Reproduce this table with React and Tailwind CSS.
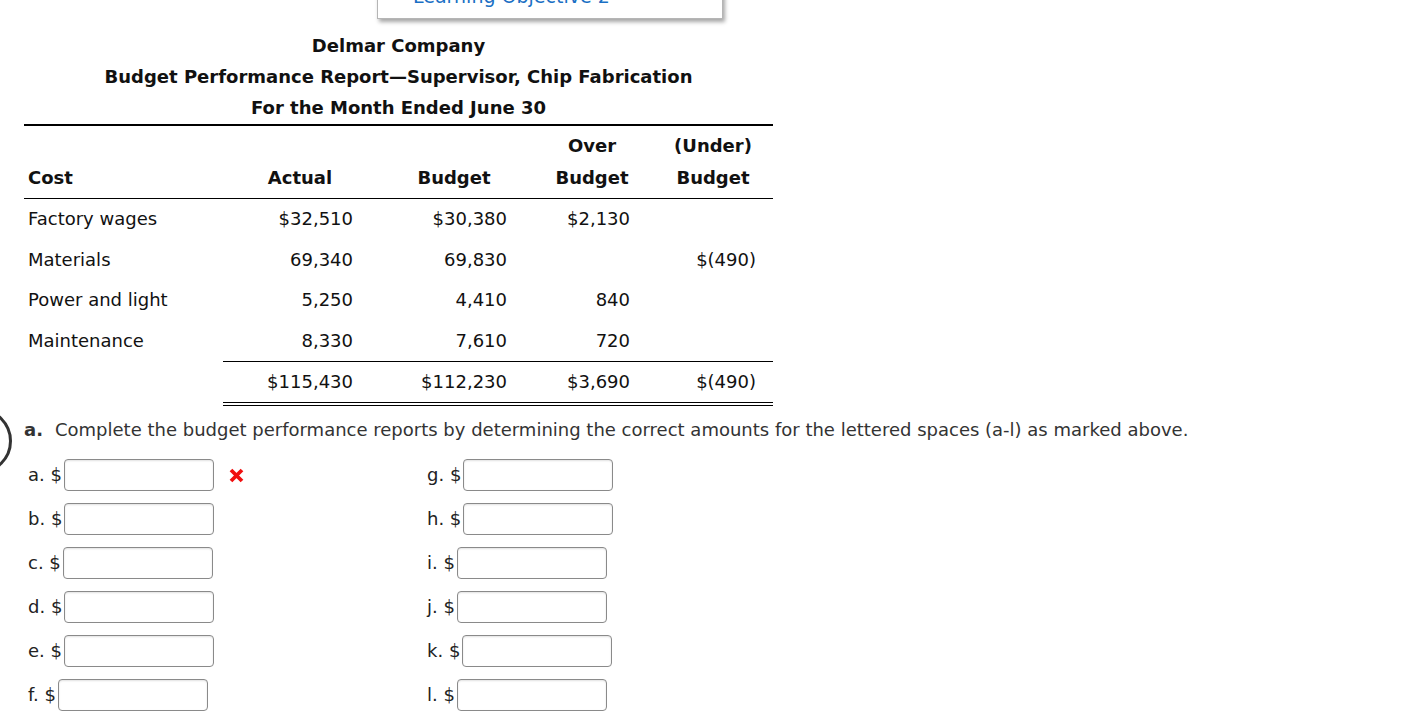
import React from "react";

const rows = [
  ["Factory wages", "$32,510", "$30,380", "$2,130", ""],
  ["Materials", "69,340", "69,830", "", "$(490)"],
  ["Power and light", "5,250", "4,410", "840", ""],
  ["Maintenance", "8,330", "7,610", "720", ""],
];

function RedX() {
  return (
    <svg width="15" height="15" viewBox="0 0 15 15" className="ml-[15px]">
      <path d="M2 2 L13 13 M13 2 L2 13" stroke="#f01010" strokeWidth="3.8" strokeLinecap="butt" />
    </svg>
  );
}

function Field({ label, x }) {
  return (
    <div className="flex items-center h-[32px]">
      <span className="whitespace-pre">{label} $</span>
      <div className="ml-[2px] w-[150px] h-[32px] rounded-[4px] border border-[#8a8a8a] bg-white shadow-[inset_0_1px_2px_rgba(0,0,0,0.12)]" />
      {x ? <RedX /> : null}
    </div>
  );
}

export default function App() {
  const left = ["a.", "b.", "c.", "d.", "e.", "f."];
  const right = ["g.", "h.", "i.", "j.", "k.", "l."];
  return (
    <div className="relative w-[1402px] h-[721px] overflow-hidden bg-white font-['DejaVu_Sans',sans-serif] text-[18px] leading-[22px] text-[#111]">
      <div className="ml-[377px] w-[346px] h-[40px] -mt-[21px] border border-[#b5b5b5] bg-white shadow-[2px_3px_4px_rgba(0,0,0,0.35)] pt-[5px] pl-[35px] text-[#1a6fc4] text-[19px]">
        Learning Objective 2
      </div>

      <div className="ml-[24px] w-[749px] mt-[11px] text-center font-bold leading-[31px]">
        <div>Delmar Company</div>
        <div>Budget Performance Report—Supervisor, Chip Fabrication</div>
        <div>For the Month Ended June 30</div>
      </div>

      <table className="ml-[24px] mt-[1px] w-[749px] border-t-2 border-black">
        <colgroup>
          <col className="w-[199px]" />
          <col className="w-[154px]" />
          <col className="w-[154px]" />
          <col className="w-[122px]" />
          <col className="w-[120px]" />
        </colgroup>
        <thead className="font-bold">
          <tr>
            <th className="pt-[9px] pb-[5px]" />
            <th />
            <th />
            <th className="pt-[9px] pb-[5px] text-center">Over</th>
            <th className="pt-[9px] pb-[5px] text-center">(Under)</th>
          </tr>
          <tr className="border-b border-black">
            <th className="pt-[5px] pb-[9px] pl-[4px] text-left">Cost</th>
            <th className="pt-[5px] pb-[9px] text-center">Actual</th>
            <th className="pt-[5px] pb-[9px] text-center">Budget</th>
            <th className="pt-[5px] pb-[9px] text-center">Budget</th>
            <th className="pt-[5px] pb-[9px] text-center">Budget</th>
          </tr>
        </thead>
        <tbody>
          {rows.map((r) => (
            <tr key={r[0]}>
              <td className="pt-[9px] pb-[9.5px] pl-[4px]">{r[0]}</td>
              <td className="pt-[9px] pb-[9.5px] pr-[24px] text-right">{r[1]}</td>
              <td className="pt-[9px] pb-[9.5px] pr-[24px] text-right">{r[2]}</td>
              <td className="pt-[9px] pb-[9.5px] pr-[23px] text-right">{r[3]}</td>
              <td className="pt-[9px] pb-[9.5px] pr-[17px] text-right">{r[4]}</td>
            </tr>
          ))}
          <tr>
            <td className="pt-[9px] pb-[9px]" />
            <td className="pt-[9px] pb-[9px] pr-[24px] text-right border-t border-b-4 [border-bottom-style:double] border-black">$115,430</td>
            <td className="pt-[9px] pb-[9px] pr-[24px] text-right border-t border-b-4 [border-bottom-style:double] border-black">$112,230</td>
            <td className="pt-[9px] pb-[9px] pr-[23px] text-right border-t border-b-4 [border-bottom-style:double] border-black">$3,690</td>
            <td className="pt-[9px] pb-[9px] pr-[17px] text-right border-t border-b-4 [border-bottom-style:double] border-black">$(490)</td>
          </tr>
        </tbody>
      </table>

      <div className="ml-[24px] mt-[13px] flex text-[#333]">
        <span className="w-[31px] font-bold">a.</span>
        <span>Complete the budget performance reports by determining the correct amounts for the lettered spaces (a-l) as marked above.</span>
      </div>

      <div className="mt-[18px] flex text-[#222]">
        <div className="ml-[28px] w-[399px] flex flex-col gap-[12px]">
          {left.map((l, i) => (
            <Field key={l} label={l} x={i === 0} />
          ))}
        </div>
        <div className="flex flex-col gap-[12px]">
          {right.map((l) => (
            <Field key={l} label={l} />
          ))}
        </div>
      </div>

      <div className="absolute left-[-54px] top-[408px] w-[66px] h-[66px] rounded-full border-[3px] border-[#333]" />
    </div>
  );
}
